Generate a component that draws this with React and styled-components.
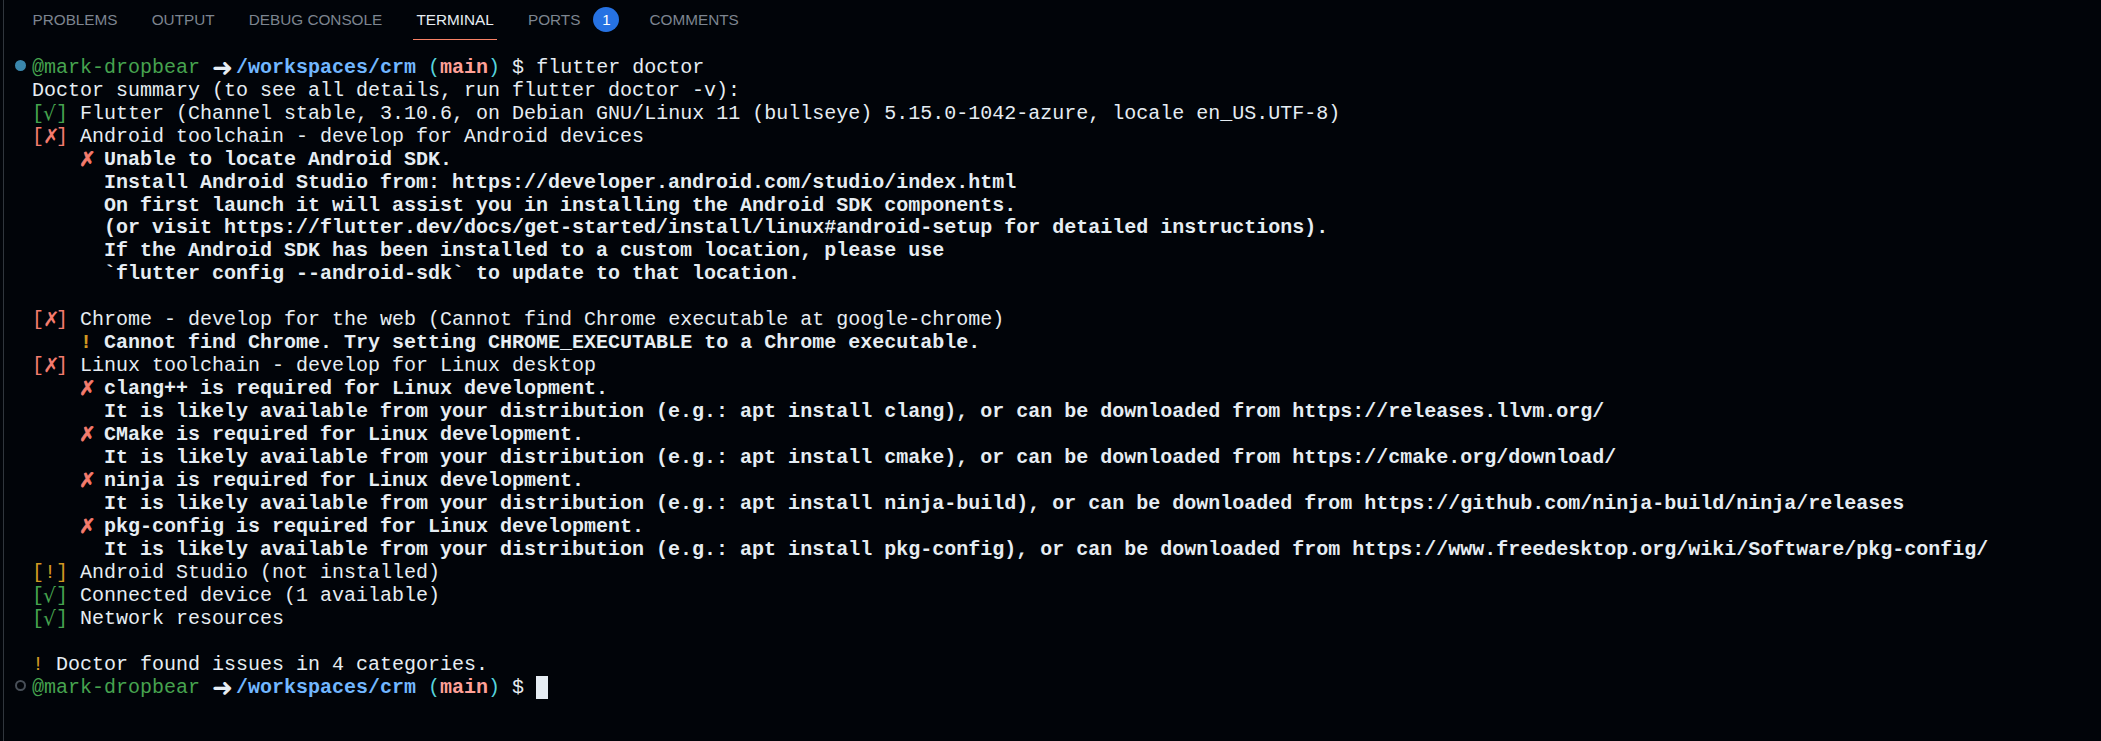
import React from "react";
import styled, { createGlobalStyle } from "styled-components";

const Global = createGlobalStyle`
  html, body { margin: 0; padding: 0; background: #010409; height: 100%; overflow: hidden; }
  #root { height: 100%; }
`;

const Panel = styled.div`
  width: 2098px;
  height: 741px;
  margin-left: 3px;
  background: #010409;
  border-left: 1px solid #30363d;
  box-sizing: border-box;
  overflow: hidden;
`;

const TabBar = styled.div`
  display: flex;
  align-items: flex-start;
  height: 40px;
  padding-left: 28.5px;
  gap: 34.2px;
`;

const Tab = styled.div`
  display: flex;
  align-items: center;
  gap: 13px;
  height: 40px;
  margin: 0 ${(p) => (p.$active ? "-3.5px" : "0")};
  padding: 0 ${(p) => (p.$active ? "3.5px" : "0")};
  box-sizing: border-box;
  font: 400 15.3px/1 "Liberation Sans", sans-serif;
  color: ${(p) => (p.$active ? "#e6edf3" : "#7d8590")};
  border-bottom: 1px solid ${(p) => (p.$active ? "#f78166" : "transparent")};
`;

const Badge = styled.span`
  display: inline-flex;
  align-items: center;
  justify-content: center;
  width: 26px;
  height: 25px;
  margin-right: -4px;
  border-radius: 50%;
  background: #2672e3;
  color: #fff;
  font-size: 15px;
`;

const Terminal = styled.div`
  padding-top: 15.7px;
  font: 400 20px/23px "Liberation Mono", monospace;
  color: #e6edf3;
`;

const Row = styled.div`
  position: relative;
  height: 22.98px;
  padding-left: 28px;
  white-space: pre;
  font-weight: ${(p) => (p.$bold ? 700 : 400)};
`;

const Deco = styled.span`
  position: absolute;
  left: 11px;
  top: 4.5px;
  width: 11px;
  height: 11px;
  box-sizing: border-box;
  border-radius: 50%;
  background: ${(p) => (p.$filled ? "#3a87ad" : "transparent")};
  border: 2px solid ${(p) => (p.$filled ? "#3a87ad" : "#484f58")};
`;

const Colored = styled.span`
  color: ${(p) => p.$c};
  font-weight: ${(p) => p.$w || "inherit"};
`;

/* Symbols that the terminal font lacks: the fallback glyph is kept to its terminal cell. */
const Symbol = styled.span`
  display: inline-block;
  width: 12px;
  margin-left: -1px;
  margin-right: 1px;
  font-family: "DejaVu Sans", sans-serif;
  letter-spacing: ${(p) => (p.$g === "√" ? "-0.72px" : "-4.76px")};
  color: ${(p) => p.$c};
  line-height: 23px;
  vertical-align: top;
  -webkit-text-stroke: ${(p) => (p.$heavy ? "0.7px" : "0")};
`;

const PromptArrow = styled.span`
  display: inline-block;
  width: 24px;
  font: 700 25px/23px "DejaVu Sans", sans-serif;
  letter-spacing: -3px;
  color: #e6edf3;
  vertical-align: top;
`;

const Cursor = styled.span`
  display: inline-block;
  width: 12px;
  height: 23px;
  background: #e6edf3;
  vertical-align: top;
`;

const GREEN = "#46a34f";
const RED = "#f47c6e";
const AMBER = "#d29922";

const Prompt = () => (
  <>
    <Colored $c={GREEN}>@mark-dropbear </Colored>
    <PromptArrow>➜</PromptArrow>
    <Colored $c="#71b7ff" $w={700}>/workspaces/crm</Colored>
    <Colored $c="#56d4dd"> (</Colored>
    <Colored $c="#ffa198" $w={700}>main</Colored>
    <Colored $c="#56d4dd">)</Colored>
    {" $ "}
  </>
);

const Glyph = ({ c, g, heavy }) =>
  g === "!" ? <Colored $c={c}>{g}</Colored> : <Symbol $c={c} $g={g} $heavy={heavy}>{g}</Symbol>;

const Sev = ({ c, g, t }) => (
  <Row $bold>
    {"    "}
    <Glyph c={c} g={g} heavy />
    {" " + t}
  </Row>
);

const Text = ({ t }) => <Row $bold>{"      " + t}</Row>;

const Status = ({ c, g, t }) => (
  <Row>
    <Colored $c={c}>[</Colored>
    <Glyph c={c} g={g} />
    <Colored $c={c}>]</Colored>
    {" " + t}
  </Row>
);

export default function App() {
  return (
    <Panel>
      <Global />
      <TabBar>
        <Tab>PROBLEMS</Tab>
        <Tab>OUTPUT</Tab>
        <Tab>DEBUG CONSOLE</Tab>
        <Tab $active>TERMINAL</Tab>
        <Tab>PORTS <Badge>1</Badge></Tab>
        <Tab>COMMENTS</Tab>
      </TabBar>
      <Terminal>
        <Row><Deco $filled /><Prompt />flutter doctor</Row>
        <Row>Doctor summary (to see all details, run flutter doctor -v):</Row>
        <Status c={GREEN} g="√" t="Flutter (Channel stable, 3.10.6, on Debian GNU/Linux 11 (bullseye) 5.15.0-1042-azure, locale en_US.UTF-8)" />
        <Status c={RED} g="✗" t="Android toolchain - develop for Android devices" />
        <Sev c={RED} g="✗" t="Unable to locate Android SDK." />
        <Text t="Install Android Studio from: https://developer.android.com/studio/index.html" />
        <Text t="On first launch it will assist you in installing the Android SDK components." />
        <Text t="(or visit https://flutter.dev/docs/get-started/install/linux#android-setup for detailed instructions)." />
        <Text t="If the Android SDK has been installed to a custom location, please use" />
        <Text t="`flutter config --android-sdk` to update to that location." />
        <Row> </Row>
        <Status c={RED} g="✗" t="Chrome - develop for the web (Cannot find Chrome executable at google-chrome)" />
        <Sev c={AMBER} g="!" t="Cannot find Chrome. Try setting CHROME_EXECUTABLE to a Chrome executable." />
        <Status c={RED} g="✗" t="Linux toolchain - develop for Linux desktop" />
        <Sev c={RED} g="✗" t="clang++ is required for Linux development." />
        <Text t="It is likely available from your distribution (e.g.: apt install clang), or can be downloaded from https://releases.llvm.org/" />
        <Sev c={RED} g="✗" t="CMake is required for Linux development." />
        <Text t="It is likely available from your distribution (e.g.: apt install cmake), or can be downloaded from https://cmake.org/download/" />
        <Sev c={RED} g="✗" t="ninja is required for Linux development." />
        <Text t="It is likely available from your distribution (e.g.: apt install ninja-build), or can be downloaded from https://github.com/ninja-build/ninja/releases" />
        <Sev c={RED} g="✗" t="pkg-config is required for Linux development." />
        <Text t="It is likely available from your distribution (e.g.: apt install pkg-config), or can be downloaded from https://www.freedesktop.org/wiki/Software/pkg-config/" />
        <Status c={AMBER} g="!" t="Android Studio (not installed)" />
        <Status c={GREEN} g="√" t="Connected device (1 available)" />
        <Status c={GREEN} g="√" t="Network resources" />
        <Row> </Row>
        <Row><Colored $c={AMBER}>!</Colored> Doctor found issues in 4 categories.</Row>
        <Row><Deco /><Prompt /><Cursor /></Row>
      </Terminal>
    </Panel>
  );
}
